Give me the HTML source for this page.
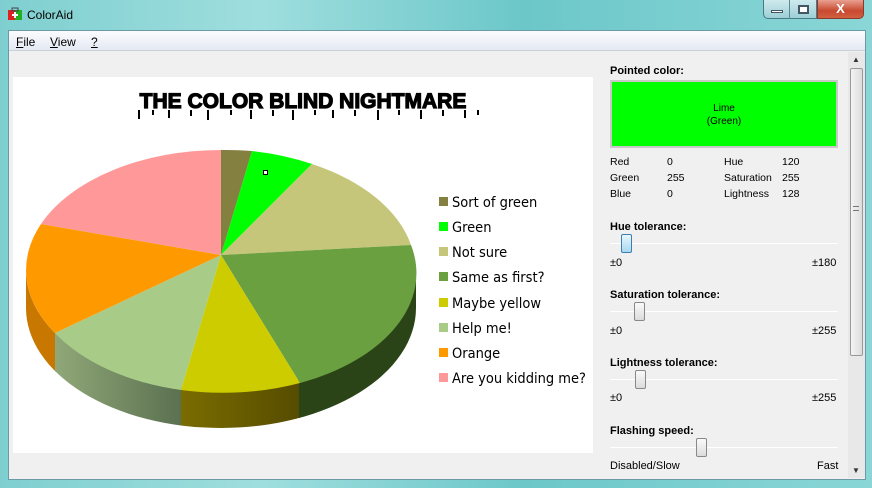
<!DOCTYPE html>
<html><head><meta charset="utf-8"><style>
*{margin:0;padding:0;box-sizing:border-box}
body{width:872px;height:488px;overflow:hidden;font-family:"Liberation Sans",sans-serif;font-size:11px;color:#000;position:relative;background:linear-gradient(90deg,#7fcfd0,#9fdede 30%,#6cc7c9 60%,#8ad6d6);}
.abs{position:absolute}
#title{left:27px;top:8px;font-size:12px;color:#000}
#client{left:8px;top:30px;width:858px;height:450px;background:#f0f0f0;border:1px solid #6a9aa8}
#menu{left:0;top:0;width:856px;height:20px;background:linear-gradient(#fbfcfe,#e4e9f2);border-bottom:1px solid #c8d0dc}
#menu span{position:absolute;top:4px;font-size:12px}
#chart{left:4px;top:46px;width:580px;height:376px;background:#fff}
.lbl{font-weight:bold;font-size:11px}
.sl{position:absolute;left:610px;width:228px;height:1px;background:#c0c0c0;border-bottom:1px solid #fff}
.th{position:absolute;width:11px;height:19px;border:1px solid #888;border-radius:2px;background:linear-gradient(#fafafa,#dcdcdc)}
</style></head><body>
<svg class="abs" style="left:8px;top:7px" width="14" height="14"><rect x="0" y="3" width="7" height="10" fill="#e02020"/><rect x="7" y="3" width="7" height="10" fill="#20b020"/><rect x="4" y="1" width="6" height="3" fill="none" stroke="#444"/><rect x="6" y="5" width="2" height="6" fill="#fff"/><rect x="4" y="7" width="6" height="2" fill="#fff"/></svg>
<div id="title" class="abs">ColorAid</div>
<div class="abs" style="left:763px;top:0;width:54px;height:19px;border:1px solid #4a7a88;border-top:none;border-radius:0 0 0 5px;background:linear-gradient(#cfeaee,#9ccfd6)"></div>
<div class="abs" style="left:789px;top:0;width:1px;height:19px;background:#5a8a98"></div>
<div class="abs" style="left:771px;top:10px;width:12px;height:3px;background:#fff;border:1px solid #456"></div>
<div class="abs" style="left:798px;top:5px;width:11px;height:9px;border:2px solid #456;background:#fff"></div>
<div class="abs" style="left:817px;top:0;width:47px;height:19px;border:1px solid #8a3a2a;border-top:none;border-radius:0 0 5px 0;background:linear-gradient(#e8a090,#c84a30 60%,#d06040);color:#fff;font-weight:bold;font-size:13px;text-align:center;line-height:17px">X</div>
<div id="client" class="abs">
<div id="menu" class="abs"><span style="left:7px"><u>F</u>ile</span><span style="left:41px"><u>V</u>iew</span><span style="left:82px"><u>?</u></span></div>
<div id="chart" class="abs">
<div class="abs" style="left:0;top:13px;width:580px;text-align:center;font-family:'Liberation Sans';font-weight:900;font-size:21px;-webkit-text-stroke:1.2px #000">THE COLOR BLIND NIGHTMARE</div>
<svg class="abs" style="left:120px;top:33px" width="350" height="12"><g stroke="#000" stroke-width="2"><line x1="6" y1="0" x2="6" y2="9"/><line x1="20" y1="0" x2="20" y2="5"/><line x1="36" y1="0" x2="36" y2="8"/><line x1="58" y1="0" x2="58" y2="6"/><line x1="75" y1="0" x2="75" y2="10"/><line x1="98" y1="0" x2="98" y2="5"/><line x1="118" y1="0" x2="118" y2="9"/><line x1="140" y1="0" x2="140" y2="6"/><line x1="160" y1="0" x2="160" y2="10"/><line x1="182" y1="0" x2="182" y2="5"/><line x1="200" y1="0" x2="200" y2="8"/><line x1="222" y1="0" x2="222" y2="6"/><line x1="245" y1="0" x2="245" y2="10"/><line x1="266" y1="0" x2="266" y2="5"/><line x1="288" y1="0" x2="288" y2="9"/><line x1="310" y1="0" x2="310" y2="6"/><line x1="332" y1="0" x2="332" y2="8"/><line x1="345" y1="0" x2="345" y2="5"/></g></svg>
</div>
</div>
<svg class="abs" style="left:0;top:0" width="600" height="488">
<defs>
<linearGradient id="gh" x1="0" x2="1"><stop offset="0" stop-color="#90a878"/><stop offset="1" stop-color="#5a7050"/></linearGradient>
<linearGradient id="gm" x1="0" x2="1"><stop offset="0" stop-color="#7a6c00"/><stop offset="1" stop-color="#564c00"/></linearGradient>
<clipPath id="side"><path d="M26 270 A195 120 0 0 0 416 270 L416 308 A195 120 0 0 1 26 308 Z"/></clipPath>
</defs>
<g clip-path="url(#side)">
<rect x="20" y="260" width="36" height="200" fill="#c87800"/>
<rect x="55" y="260" width="127" height="200" fill="url(#gh)"/>
<rect x="181" y="260" width="119" height="200" fill="url(#gm)"/>
<rect x="299" y="260" width="125" height="200" fill="#2a4418"/>
</g>
<g>
<path d="M221 255 L221 150 A195 120 0 0 1 252 151 Z" fill="#848040"/>
<path d="M221 255 L252 151 A195 120 0 0 1 312 164 Z" fill="#00ff00"/>
<path d="M221 255 L312 164 A195 120 0 0 1 411 245 Z" fill="#c6c67a"/>
<path d="M221 255 L411 245 A195 120 0 0 1 300 383 Z" fill="#6aa040"/>
<path d="M221 255 L300 383 A195 120 0 0 1 181 390 Z" fill="#cccc00"/>
<path d="M221 255 L181 390 A195 120 0 0 1 55 333 Z" fill="#a8cc88"/>
<path d="M221 255 L55 333 A195 120 0 0 1 41 224 Z" fill="#ff9900"/>
<path d="M221 255 L41 224 A195 120 0 0 1 221 150 Z" fill="#ff9999"/>
</g>
<rect x="263.5" y="170.5" width="4" height="4" fill="#fff" stroke="#000"/>
<g font-family="'DejaVu Sans Condensed','Liberation Sans',sans-serif" font-size="14.5">
<rect x="439" y="197" width="9" height="9" fill="#848040"/><text x="452" y="207">Sort of green</text>
<rect x="439" y="222" width="9" height="9" fill="#00ff00"/><text x="452" y="232">Green</text>
<rect x="439" y="247" width="9" height="9" fill="#c6c67a"/><text x="452" y="257">Not sure</text>
<rect x="439" y="272" width="9" height="9" fill="#6aa040"/><text x="452" y="282">Same as first?</text>
<rect x="439" y="298" width="9" height="9" fill="#cccc00"/><text x="452" y="308">Maybe yellow</text>
<rect x="439" y="323" width="9" height="9" fill="#a8cc88"/><text x="452" y="333">Help me!</text>
<rect x="439" y="348" width="9" height="9" fill="#ff9900"/><text x="452" y="358">Orange</text>
<rect x="439" y="373" width="9" height="9" fill="#ff9999"/><text x="452" y="383">Are you kidding me?</text>
</g>
</svg>
<div class="abs lbl" style="left:610px;top:65px">Pointed color:</div>
<div class="abs" style="left:610px;top:80px;width:228px;height:68px;background:#00ff00;border:2px solid #c8c8c8;text-align:center;padding-top:20px;line-height:13px;font-size:10px">Lime<br>(Green)</div>
<div class="abs" style="left:610px;top:154px;line-height:16px;font-size:10.5px">Red<br>Green<br>Blue</div>
<div class="abs" style="left:667px;top:154px;line-height:16px;font-size:10.5px">0<br>255<br>0</div>
<div class="abs" style="left:724px;top:154px;line-height:16px;font-size:10.5px">Hue<br>Saturation<br>Lightness</div>
<div class="abs" style="left:782px;top:154px;line-height:16px;font-size:10.5px">120<br>255<br>128</div>
<div class="abs lbl" style="left:610px;top:221px">Hue tolerance:</div>
<div class="sl" style="top:243px"></div><div class="th" style="left:621px;top:234px;border-color:#3c7fb1;background:linear-gradient(#eaf6fd,#a8d8f0)"></div>
<div class="abs" style="left:610px;top:257px">±0</div><div class="abs" style="left:812px;top:257px">±180</div>
<div class="abs lbl" style="left:610px;top:289px">Saturation tolerance:</div>
<div class="sl" style="top:311px"></div><div class="th" style="left:634px;top:302px"></div>
<div class="abs" style="left:610px;top:325px">±0</div><div class="abs" style="left:812px;top:325px">±255</div>
<div class="abs lbl" style="left:610px;top:357px">Lightness tolerance:</div>
<div class="sl" style="top:379px"></div><div class="th" style="left:635px;top:370px"></div>
<div class="abs" style="left:610px;top:392px">±0</div><div class="abs" style="left:812px;top:392px">±255</div>
<div class="abs lbl" style="left:610px;top:425px">Flashing speed:</div>
<div class="sl" style="top:447px"></div><div class="th" style="left:696px;top:438px"></div>
<div class="abs" style="left:610px;top:460px">Disabled/Slow</div><div class="abs" style="left:817px;top:460px">Fast</div>
<div class="abs" style="left:848px;top:52px;width:17px;height:426px;background:#e8e8e8"></div>
<div class="abs" style="left:850px;top:68px;width:13px;height:288px;border:1px solid #999;border-radius:2px;background:linear-gradient(90deg,#f4f4f4,#dcdcdc)"></div>
<div class="abs" style="left:852px;top:55px;font-size:8px;color:#333">▲</div>
<div class="abs" style="left:852px;top:466px;font-size:8px;color:#333">▼</div>
<div class="abs" style="left:853px;top:206px;width:6px;height:5px;border-top:1px solid #777;border-bottom:1px solid #777"></div>
</body></html>
